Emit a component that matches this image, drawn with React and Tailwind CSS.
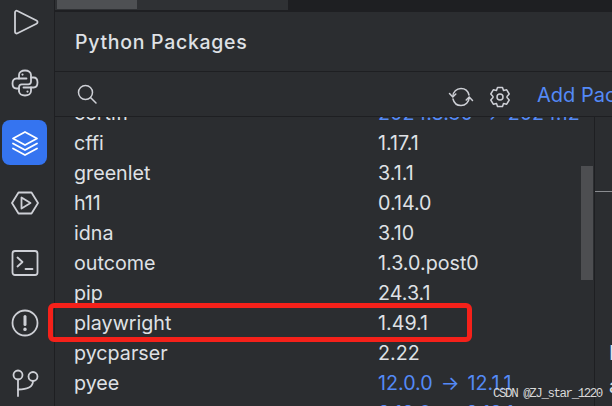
import React from "react";

const packages = [
  { name: "certifi", version: "2024.8.30", latest: "2024.12" },
  { name: "cffi", version: "1.17.1" },
  { name: "greenlet", version: "3.1.1" },
  { name: "h11", version: "0.14.0" },
  { name: "idna", version: "3.10" },
  { name: "outcome", version: "1.3.0.post0" },
  { name: "pip", version: "24.3.1" },
  { name: "playwright", version: "1.49.1" },
  { name: "pycparser", version: "2.22" },
  { name: "pyee", version: "12.0.0", latest: "12.1.1" },
  { name: "pygments", version: "2.18.0", latest: "2.19.1" },
];

const Icon = ({ children, color = "#ced0d6" }) => (
  <svg width="28" height="28" viewBox="0 0 28 28" fill="none" stroke={color} strokeWidth="1.800" strokeLinecap="round" strokeLinejoin="round" className="shrink-0">
    {children}
  </svg>
);

const Slot = ({ children, className = "" }) => (
  <div className={`w-[45px] h-[44px] shrink-0 flex items-center justify-center ${className}`}>{children}</div>
);

// left tool strip
function SideBar() {
  return (
    <aside className="w-[55px] shrink-0 border-r border-[#1e1f22] flex flex-col pl-[2px]">
      <Slot>
        <Icon>
          <path d="M4 4.500c0-1.500 1.300-2.200 2.500-1.500l19 9.500c1.400.7 1.400 2.500 0 3.200l-19 9.500c-1.200.7-2.500 0-2.500-1.500z" />
        </Icon>
      </Slot>
      <Slot className="mt-[17px]">
        <Icon>
          <path d="M8 9.500h7.500M8 9.500V6c0-2.500 2.500-4.500 6-4.500s6 2 6 4.500v6.500c0 1.500-1.200 2.800-2.800 2.800h-6.400C9.200 15.300 8 16.600 8 18.200v3.800" />
          <path d="M8 9.500H5.500C3 9.500 1.500 11.300 1.500 14.500s1.500 5 4 5H8" />
          <path d="M20 18.500h-7.500M20 18.500V22c0 2.500-2.500 4.500-6 4.500s-6-2-6-4.500" />
          <path d="M20 8.500h2.500c2.500 0 4 1.800 4 5s-1.500 5-4 5H20" />
          <path d="M11.500 5.500v.1M16.500 22.500v.1" strokeWidth="2.200" />
        </Icon>
      </Slot>
      <div className="mt-[15px] w-[45px] h-[45px] shrink-0 rounded-[8px] bg-[#3574f0] flex items-center justify-center">
        <Icon color="#ffffff">
          <path d="M14 3 26 9.500 14 16 2 9.500z" />
          <path d="M2 14.500 14 21l12-6.500" />
          <path d="M2 19.500 14 26l12-6.500" />
        </Icon>
      </div>
      <Slot className="mt-[16px]">
        <Icon>
          <path d="M7.500 3.500h13L27 14l-6.500 10.500h-13L1 14z" />
          <path d="M10.500 8.500v11l9-5.500z" />
        </Icon>
      </Slot>
      <Slot className="mt-[16px]">
        <Icon>
          <rect x="1.500" y="2" width="25" height="24" rx="2.500" />
          <path d="m6.500 8.500 5 4.500-5 4.500" />
          <path d="M14.500 20h7" />
        </Icon>
      </Slot>
      <Slot className="mt-[16px]">
        <Icon>
          <circle cx="14" cy="14" r="12.500" />
          <path d="M14 7.500v8" strokeWidth="3" />
          <path d="M14 20.300v.1" strokeWidth="3.400" />
        </Icon>
      </Slot>
      <Slot className="mt-[16px]">
        <Icon>
          <circle cx="7" cy="6" r="4.500" />
          <circle cx="22" cy="7.500" r="4.500" />
          <path d="M7 10.500V27" />
          <path d="M22 12c0 5.500-5 8.500-15 8.500" />
        </Icon>
      </Slot>
    </aside>
  );
}

function Row({ pkg }) {
  return (
    <div className="h-[30px] shrink-0 flex items-center">
      <div className="w-[323px] pl-[19px] text-[#dfe1e5]">{pkg.name}</div>
      {pkg.latest ? (
        <div className="text-[#548af7]">
          {pkg.version}
          <span className="mx-[8px]">→</span>
          {pkg.latest}
        </div>
      ) : (
        <div className="text-[#dfe1e5]">{pkg.version}</div>
      )}
    </div>
  );
}

export default function App() {
  return (
    <div className="relative w-[612px] h-[406px] overflow-hidden flex bg-[#2b2d30] font-['Inter',sans-serif] text-[19.7px]">
      <SideBar />
      <main className="flex-1 min-w-0 flex flex-col">
        {/* top tab strip */}
        <div className="h-[12px] shrink-0 bg-[#1e1f22] flex">
          <div className="w-[233px] h-[10px] pl-[2px] bg-[#2f3134]">
            <div className="w-[80px] h-[9px] bg-[#4e5053]" />
          </div>
        </div>
        <div className="h-[60px] pt-[2px] shrink-0 flex items-center pl-[20px] border-b border-[#1e1f22] text-[#dfe1e5] font-medium text-[19.500px] tracking-[0.7px]">
          Python Packages
        </div>
        <div className="h-[45px] shrink-0 flex items-center border-b border-[#1e1f22] pl-[21px] whitespace-nowrap">
          <svg width="22" height="22" viewBox="0 0 22 22" fill="none" stroke="#ced0d6" strokeWidth="1.500" strokeLinecap="round" className="shrink-0 -mt-[1px]">
            <circle cx="9.500" cy="9.500" r="7" />
            <path d="m14.500 14.500 5.500 5.500" />
          </svg>
          <svg width="26" height="26" viewBox="0 0 26 26" fill="none" stroke="#ced0d6" strokeWidth="1.500" strokeLinecap="round" strokeLinejoin="round" className="shrink-0 ml-[350px] mt-[6px]">
            <path d="M21 11C20 7 17 4.500 13 4.500 8.500 4.500 5 8 4.800 12.500" />
            <path d="M1.500 9.500 4.800 13l3-3" />
            <path d="M5 15c1 4 4 6.500 8 6.500 4.500 0 8-3.500 8.200-8" />
            <path d="M24.500 16.500 21.200 13l-3 3" />
          </svg>
          <svg width="22" height="22" viewBox="0 0 22 22" fill="none" stroke="#ced0d6" strokeWidth="1.500" strokeLinejoin="round" className="shrink-0 ml-[15px] mt-[6px]">
            <path d="M8.500 1.500h5l1 3 3.200-.7 2.500 4.200L18 10.500v1l2.200 2.500-2.500 4.200-3.200-.7-1 3h-5l-1-3-3.200.7L1.800 14 4 11.500v-1L1.800 8l2.500-4.200 3.200.7z" />
            <circle cx="11" cy="11" r="3" />
          </svg>
          <span className="ml-[26px] text-[#548af7] text-[20px] mt-[1px]">Add Packages</span>
        </div>
        <div className="flex-1 min-h-0 flex">
          {/* package list, scrolled so certifi is cut by the toolbar */}
          <div className="w-[539px] shrink-0 relative overflow-hidden whitespace-nowrap">
            <div className="-mt-[18px] flex flex-col">
              {packages.map((p) => (
                <Row key={p.name} pkg={p} />
              ))}
            </div>
            <div className="absolute right-[1px] top-[49px] w-[12px] h-[114px] bg-[#4d4e51]" />
          </div>
          {/* details pane, mostly off screen */}
          <div className="flex-1 border-l border-[#1e1f22] flex flex-col">
            <div className="mt-[74px] h-[1px] bg-[#8a8c90]" />
            <div className="mt-[150px] pl-[14px] text-[#dfe1e5] leading-[22px]">P</div>
            <div className="mt-[11px] pl-[14px] text-[#dfe1e5] leading-[22px]">a</div>
          </div>
        </div>
      </main>
      {/* red annotation box */}
      <div className="absolute left-[48px] top-[303px] w-[424px] h-[39px] border-[5px] border-[#f5211a] rounded-[6px]" />
      {/* watermark */}
      <div className="absolute left-[493px] top-[385px] text-[12.500px] leading-[18px] whitespace-nowrap text-[#d8d8d8] font-['Liberation_Mono',monospace] tracking-[-1.450px]">
        CSDN @ZJ_star_1220
      </div>
    </div>
  );
}
